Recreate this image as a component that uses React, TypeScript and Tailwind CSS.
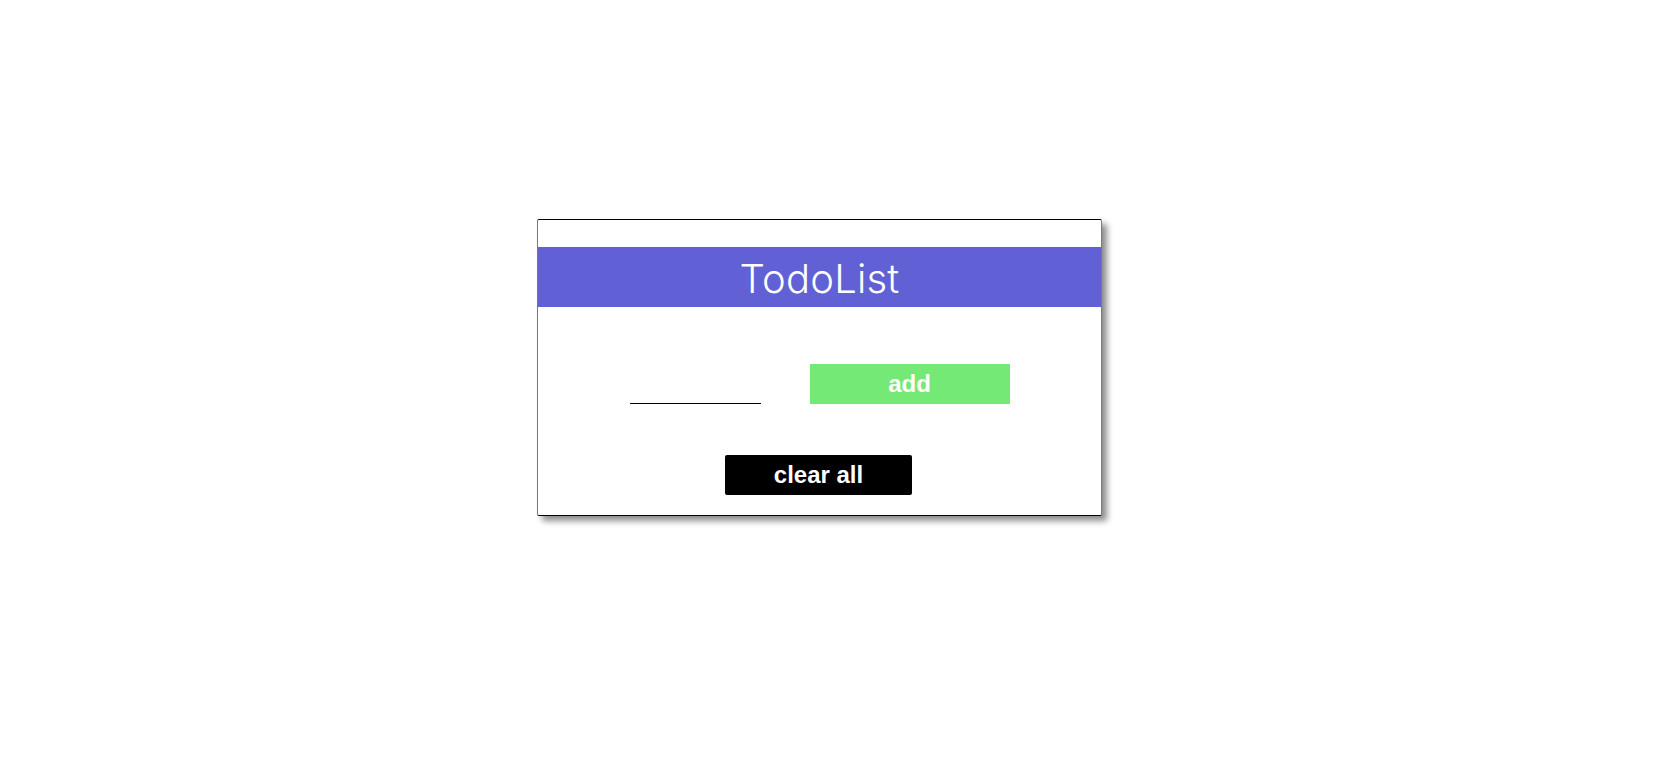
export default function App() {
  return (
    <div className="min-h-[760px] w-full bg-white pt-[219px] pl-[537px]">
      <div className="w-[565px] h-[297px] border border-black border-x-[#7a7a7a] rounded-[2px] bg-white shadow-[5px_5px_6px_rgba(0,0,0,0.45)] pt-[27px] flex flex-col">
        <div className="h-[60px] bg-[#6161d5] flex items-center justify-center">
          <h1 className="text-white text-[40px] font-light leading-none tracking-[0.2px] font-['Inter',sans-serif] pt-[3px]">
            TodoList
          </h1>
        </div>
        <div className="flex items-end justify-center gap-[49px] mt-[57px]">
          <input
            type="text"
            className="w-[131px] h-[28px] border-b border-black outline-none bg-transparent font-['Liberation_Sans',sans-serif] text-base"
          />
          <button className="w-[200px] h-[40px] bg-[#75e975] text-white font-bold text-[24px] font-['Liberation_Sans',Arial,sans-serif]">
            add
          </button>
        </div>
        <div className="flex justify-center mt-[51px] pr-[2px]">
          <button className="w-[187px] h-[40px] bg-black rounded-[2px] text-white font-bold text-[24px] font-['Liberation_Sans',Arial,sans-serif]">
            clear all
          </button>
        </div>
      </div>
    </div>
  );
}
